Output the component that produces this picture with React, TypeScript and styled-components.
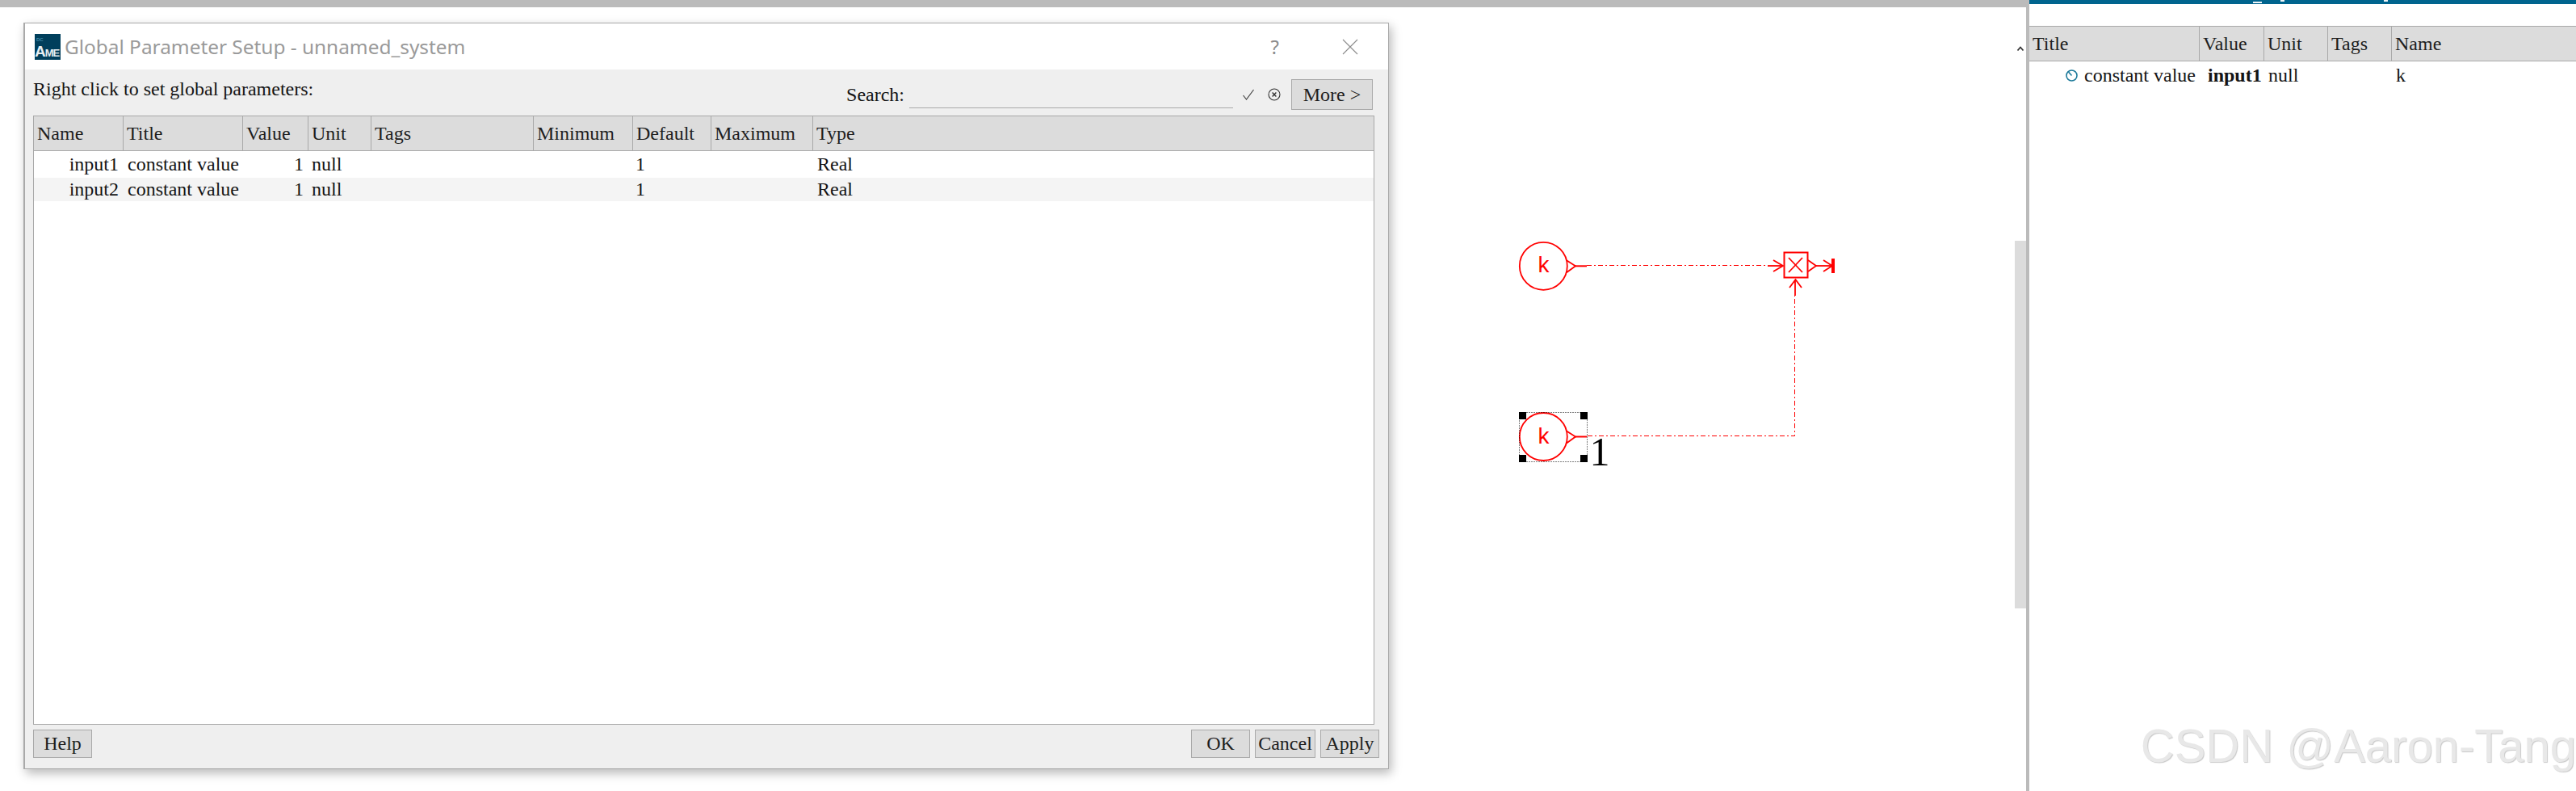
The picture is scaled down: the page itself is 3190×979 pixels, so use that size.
import React from 'react';
import styled, { createGlobalStyle } from 'styled-components';

const GlobalStyle = createGlobalStyle`
  html, body {
    margin: 0;
    padding: 0;
    background: #fff;
  }
  * { box-sizing: border-box; }
`;

const serif = '"Liberation Serif", "Times New Roman", serif';
const RED = '#ff0000';

const Page = styled.div`
  position: relative;
  width: 3190px;
  height: 979px;
  display: flex;
  overflow: hidden;
  background: #fff;
  font-family: ${serif};
  font-size: 24px;
  color: #141414;
`;

const Workspace = styled.div`
  width: 2509px;
  display: flex;
  flex-direction: column;
`;

const TopStrip = styled.div`
  height: 9px;
  background: #bbbbbb;
`;

const WorkspaceBody = styled.div`
  flex: 1;
  display: flex;
`;

const Dialog = styled.div`
  width: 1691px;
  height: 924px;
  margin: 19px 0 0 29px;
  display: flex;
  flex-direction: column;
  background: #efefef;
  border: 1px solid #a9a9a9;
  border-left-width: 2px;
  box-shadow: 3px 5px 12px rgba(0, 0, 0, 0.28);
`;

const TitleBar = styled.div`
  height: 57px;
  flex: none;
  display: flex;
  align-items: center;
  padding: 0 37px 0 12px;
  background: #fff;
`;

const Logo = styled.div`
  width: 32px;
  height: 32px;
  flex: none;
  display: flex;
  flex-direction: column;
  justify-content: flex-end;
  background: #003f5c;
  color: #e6eef2;
  font: bold 19px/21px "Liberation Sans", Arial, sans-serif;
  font-variant: small-caps;
  letter-spacing: -1px;
  overflow: hidden;
`;

const LogoMark = styled.span`
  font-size: 6px;
  line-height: 8px;
  padding-left: 2px;
  letter-spacing: 0;
  color: #3f8aa8;
`;

const DialogTitle = styled.span`
  margin-left: 5px;
  flex: 1;
  font: 24.4px "Noto Sans", "Open Sans", sans-serif;
  color: #9a9a9a;
`;

const HelpMark = styled.span`
  margin-right: 78px;
  font: 24px "Noto Sans", sans-serif;
  color: #8c8c8c;
`;

const DialogBody = styled.div`
  flex: 1;
  display: flex;
  flex-direction: column;
  padding: 0 17px 0 10px;
  min-height: 0;
`;

const ToolRow = styled.div`
  height: 57px;
  flex: none;
  display: flex;
  align-items: center;
  padding: 12px 2px 7px 0;
`;

const Hint = styled.span`
  align-self: flex-start;
  line-height: 24px;
`;

const SearchLabel = styled.label`
  margin-left: auto;
  margin-right: 6px;
`;

const SearchField = styled.div`
  width: 401px;
  height: 36px;
  align-self: flex-start;
  border-bottom: 1px solid #a9a9a9;
`;

const SearchIcons = styled.div`
  display: flex;
  gap: 16px;
  margin: 0 13px 0 11px;
`;

const Table = styled.div`
  flex: 1;
  min-height: 0;
  background: #fff;
  border: 1px solid #a9a9a9;
`;

const leftColumns = '111px 148px 81px 78px 201px 123px 97px 126px 1fr';
const rightColumns = '211px 80px 79px 79px 1fr';

const HeaderRow = styled.div<{ $columns: string }>`
  height: 43px;
  display: grid;
  grid-template-columns: ${(p) => p.$columns};
  background: #dcdcdc;
  border-bottom: 1px solid #a9a9a9;
`;

const HeaderCell = styled.div`
  display: flex;
  align-items: center;
  padding-left: 4px;
  border-right: 1px solid #a9a9a9;
  color: #1e1e1e;

  &:last-child {
    border-right: 0;
  }
`;

const DataRow = styled.div<{ $columns: string; $height: number; $striped?: boolean }>`
  height: ${(p) => p.$height}px;
  display: grid;
  grid-template-columns: ${(p) => p.$columns};
  align-items: center;
  background: ${(p) => (p.$striped ? '#f4f4f4' : '#fff')};
`;

const DataCell = styled.div<{ $end?: boolean; $bold?: boolean; $inset?: number }>`
  display: flex;
  align-items: center;
  justify-content: ${(p) => (p.$end ? 'flex-end' : 'flex-start')};
  padding: ${(p) => (p.$end ? '0 6px 0 0' : `0 0 0 ${p.$inset ?? 4}px`)};
  font-weight: ${(p) => (p.$bold ? 700 : 400)};
  white-space: nowrap;
`;

const RowLabel = styled.span`
  margin-left: 8px;
`;

const Footer = styled.div`
  height: 54px;
  flex: none;
  display: flex;
  gap: 6px;
  padding: 6px 11px 0 10px;
`;

const Button = styled.button<{ $width: number }>`
  width: ${(p) => p.$width}px;
  height: 35px;
  padding: 0;
  background: #dcdcdc;
  border: 1px solid #a9a9a9;
  font: 24px ${serif};
  color: #1e1e1e;
`;

const MoreButton = styled(Button)`
  height: 38px;
  flex: none;
`;

const Spacer = styled.div`
  flex: 1;
`;

const Canvas = styled.div`
  flex: 1;
  padding: 271px 0 0 100px;
`;

const Scroller = styled.div`
  width: 14px;
  flex: none;
  display: flex;
  flex-direction: column;
`;

const ScrollCaret = styled.div`
  height: 289px;
  padding-top: 34px;
`;

const ScrollThumb = styled.div`
  height: 455px;
  background: #dcdcdc;
`;

const Divider = styled.div`
  width: 4px;
  flex: none;
  background: #bbbbbb;
`;

const SidePanel = styled.div`
  flex: 1;
  display: flex;
  flex-direction: column;
`;

const TealBar = styled.div`
  height: 5px;
  flex: none;
  display: flex;
  padding-left: 277px;
  background: #00648e;
`;

const TitleTail = styled.i<{ $width: number; $skip: number; $low?: boolean }>`
  width: ${(p) => p.$width}px;
  height: 2px;
  margin-left: ${(p) => p.$skip}px;
  margin-top: ${(p) => (p.$low ? 2 : 0)}px;
  background: #eef4f7;
`;

const SideTable = styled.div`
  margin-top: 27px;
  border-top: 1px solid #a9a9a9;
`;

const Watermark = styled.div`
  position: absolute;
  right: 0;
  bottom: 26px;
  font: 58px "Liberation Sans", Arial, sans-serif;
  line-height: 60px;
  color: #e8e8e8;
  text-shadow: 1px 1px 1px #c9c9c9;
  white-space: nowrap;
`;

const dashDot = '6 3 2 3';

const SourceBlock = ({ cy }: { cy: number }) => (
  <g fill="none" stroke={RED}>
    <circle cx={91.3} cy={cy} r={29.5} strokeWidth={1.8} />
    <polyline points={`120,${cy - 7} 131,${cy} 120,${cy + 8}`} strokeWidth={1.8} />
    <line x1={131} y1={cy} x2={145} y2={cy} strokeWidth={2} />
    <text x={91.5} y={cy + 8} fill={RED} stroke="none" fontFamily="Liberation Sans, Arial, sans-serif" fontSize={28} textAnchor="middle">
      k
    </text>
  </g>
);

const Handle = ({ x, y }: { x: number; y: number }) => <rect x={x} y={y} width={9} height={9} fill="#000" />;

const Diagram = () => (
  <svg width={480} height={320} viewBox="0 0 480 320">
    <SourceBlock cy={49.3} />
    <SourceBlock cy={260.5} />
    <g fill="none" stroke={RED}>
      <line x1={145} y1={48.5} x2={369} y2={48.5} strokeDasharray={dashDot} />
      <polyline points="146,259.5 402.5,259.5 402.5,86" strokeDasharray={dashDot} />
      <g strokeWidth={1.8}>
        <line x1={369} y1={49} x2={388} y2={49} />
        <polyline points="376,42 388,49 376,56" />
        <rect x={389.5} y={32.5} width={29} height={31} strokeWidth={2} />
        <line x1={395} y1={39} x2={412} y2={57} />
        <line x1={412} y1={39} x2={395} y2={57} />
        <polyline points="419,42 429,49 419,56" />
        <line x1={429} y1={49} x2={449} y2={49} />
        <polyline points="438,42 449,49 438,56" />
        <line x1={403} y1={86} x2={403} y2={66} />
        <polyline points="396,76 403.5,66 411,76" />
      </g>
    </g>
    <rect x={448} y={40} width={4} height={18} fill={RED} />
    <rect x={61.5} y={230.5} width={84} height={61} fill="none" stroke="#000" strokeDasharray="1 2" />
    <Handle x={61} y={230} />
    <Handle x={137} y={230} />
    <Handle x={61} y={283} />
    <Handle x={137} y={283} />
    <text x={161} y={296} fontFamily="Liberation Serif, serif" fontSize={50} textAnchor="middle" fill="#000">
      1
    </text>
  </svg>
);

const CheckIcon = () => (
  <svg width={16} height={16} viewBox="0 0 16 16" fill="none" stroke="#444" strokeWidth={1.2}>
    <polyline points="1.5,9 5.5,14 14.5,2" />
  </svg>
);

const CancelIcon = () => (
  <svg width={16} height={16} viewBox="0 0 16 16" fill="none" stroke="#333" strokeWidth={1.1}>
    <circle cx={8} cy={8} r={7} />
    <path d="M5.6 5.6l4.8 4.8M10.4 5.6l-4.8 4.8" strokeWidth={1.4} />
  </svg>
);

const CloseIcon = () => (
  <svg width={20} height={20} viewBox="0 0 20 20" fill="none" stroke="#8c8c8c" strokeWidth={1.1}>
    <path d="M1 1l18 18M19 1L1 19" />
  </svg>
);

const GaugeIcon = () => (
  <svg width={15} height={17} viewBox="0 0 15 17" fill="none" stroke="#1d7a9a" strokeWidth={1.6}>
    <circle cx={7.5} cy={8.5} r={6.5} />
    <line x1={7.5} y1={8.5} x2={3.5} y2={4} />
  </svg>
);

const CaretIcon = () => (
  <svg width={14} height={8} viewBox="0 0 14 8" fill="none" stroke="#333" strokeWidth={1.8}>
    <polyline points="3.5,6.5 7,2.5 10.5,6.5" />
  </svg>
);

const leftHeaders = ['Name', 'Title', 'Value', 'Unit', 'Tags', 'Minimum', 'Default', 'Maximum', 'Type'];
const sideHeaders = ['Title', 'Value', 'Unit', 'Tags', 'Name'];

const parameters = [
  { name: 'input1', height: 33 },
  { name: 'input2', height: 29 },
];

const App = () => (
  <Page>
    <GlobalStyle />
    <Workspace>
      <TopStrip />
      <WorkspaceBody>
        <Dialog>
          <TitleBar>
            <Logo>
              <LogoMark>DC</LogoMark>
              Ame
            </Logo>
            <DialogTitle>Global Parameter Setup - unnamed_system</DialogTitle>
            <HelpMark>?</HelpMark>
            <CloseIcon />
          </TitleBar>
          <DialogBody>
            <ToolRow>
              <Hint>Right click to set global parameters:</Hint>
              <SearchLabel>Search:</SearchLabel>
              <SearchField />
              <SearchIcons>
                <CheckIcon />
                <CancelIcon />
              </SearchIcons>
              <MoreButton $width={101}>More &gt;</MoreButton>
            </ToolRow>
            <Table>
              <HeaderRow $columns={leftColumns}>
                {leftHeaders.map((label) => (
                  <HeaderCell key={label}>{label}</HeaderCell>
                ))}
              </HeaderRow>
              {parameters.map((param, index) => (
                <DataRow key={param.name} $columns={leftColumns} $height={param.height} $striped={index === 1}>
                  <DataCell $end>{param.name}</DataCell>
                  <DataCell $inset={5}>constant value</DataCell>
                  <DataCell $end>1</DataCell>
                  <DataCell>null</DataCell>
                  <DataCell />
                  <DataCell />
                  <DataCell $inset={3}>1</DataCell>
                  <DataCell />
                  <DataCell $inset={5}>Real</DataCell>
                </DataRow>
              ))}
            </Table>
          </DialogBody>
          <Footer>
            <Button $width={73}>Help</Button>
            <Spacer />
            <Button $width={73}>OK</Button>
            <Button $width={75}>Cancel</Button>
            <Button $width={73}>Apply</Button>
          </Footer>
        </Dialog>
        <Canvas>
          <Diagram />
        </Canvas>
        <Scroller>
          <ScrollCaret>
            <CaretIcon />
          </ScrollCaret>
          <ScrollThumb />
        </Scroller>
      </WorkspaceBody>
    </Workspace>
    <Divider />
    <SidePanel>
      <TealBar>
        <TitleTail $width={11} $skip={0} $low />
        <TitleTail $width={5} $skip={23} />
        <TitleTail $width={5} $skip={123} />
      </TealBar>
      <SideTable>
        <HeaderRow $columns={rightColumns}>
          {sideHeaders.map((label) => (
            <HeaderCell key={label}>{label}</HeaderCell>
          ))}
        </HeaderRow>
        <DataRow $columns={rightColumns} $height={35}>
          <DataCell $inset={45}>
            <GaugeIcon />
            <RowLabel>constant value</RowLabel>
          </DataCell>
          <DataCell $bold $inset={10}>input1</DataCell>
          <DataCell $inset={5}>null</DataCell>
          <DataCell />
          <DataCell $inset={5}>k</DataCell>
        </DataRow>
      </SideTable>
    </SidePanel>
    <Watermark>CSDN @Aaron-Tang</Watermark>
  </Page>
);

export default App;
